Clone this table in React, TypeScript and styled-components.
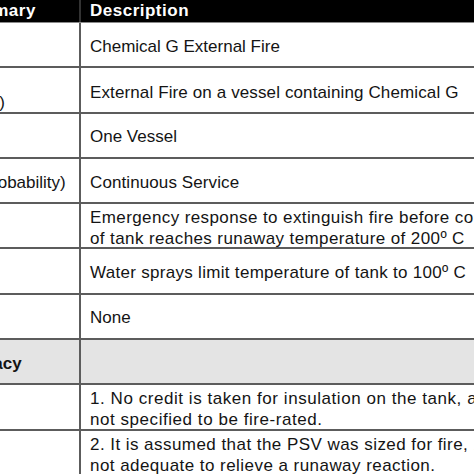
import React from 'react'
import styled, { createGlobalStyle } from 'styled-components'

const GlobalStyle = createGlobalStyle`
  html, body {
    margin: 0;
    padding: 0;
    background: #fff;
    overflow: hidden;
  }
  body {
    width: 474px;
    height: 474px;
    font-family: "Liberation Sans", Arial, Helvetica, sans-serif;
    color: #141414;
  }
`

// the table is wider than the frame: the label column is partly off to the left
const Table = styled.div`
  display: flex;
  flex-direction: column;
  width: 780px;
  margin-left: -159px;
`

const Row = styled.div<{ $shade?: boolean }>`
  display: grid;
  grid-template-columns: 240px 540px;
  height: 45.3px;
  box-sizing: border-box;
  border-bottom: 2px solid #5c5c5c;
  background: ${(p) => (p.$shade ? '#e4e4e4' : '#fff')};
`

const HeadRow = styled.div`
  display: grid;
  grid-template-columns: 240px 540px;
  height: 22px;
  background: #000;
  border-bottom: 1px solid #8a8a8a;
`

const HeadCell = styled.div<{ $first?: boolean }>`
  color: #fff;
  font-weight: bold;
  font-size: 17px;
  letter-spacing: 0.5px;
  line-height: 22px;
  padding-left: ${(p) => (p.$first ? '49px' : '9px')};
  border-right: ${(p) => (p.$first ? '2px solid #333' : 'none')};
  white-space: nowrap;
`

const Cell = styled.div<{ $first?: boolean; $bold?: boolean; $spread?: number; $top?: boolean }>`
  display: flex;
  align-items: ${(p) => (p.$top ? 'flex-start' : 'center')};
  box-sizing: border-box;
  padding: 3px 0 0 ${(p) => (p.$first ? '49px' : '9px')};
  border-right: ${(p) => (p.$first ? '2px solid #5c5c5c' : 'none')};
  font-size: 17px;
  line-height: 21px;
  font-weight: ${(p) => (p.$bold ? 'bold' : 'normal')};
  letter-spacing: ${(p) => p.$spread ?? 0}px;
  white-space: nowrap;
`

const LabelStack = styled.div`
  display: flex;
  flex-direction: column;
  width: 115px;
`

const LabelLine = styled.div<{ $end?: boolean }>`
  text-align: ${(p) => (p.$end ? 'right' : 'left')};
`

type Entry = {
  label: React.ReactNode
  text: React.ReactNode
  bold?: boolean
  shade?: boolean
  spread?: number
  top?: boolean
}

const rows: Entry[] = [
  { label: 'Scenario Title', text: 'Chemical G External Fire' },
  {
    label: (
      <LabelStack>
        <LabelLine>Initiating</LabelLine>
        <LabelLine $end>(Fire Source)</LabelLine>
      </LabelStack>
    ),
    text: 'External Fire on a vessel containing Chemical G',
    spread: 0.12,
  },
  { label: 'Equipment', text: 'One Vessel' },
  { label: 'Frequency (Probability)', text: 'Continuous Service', spread: 0.1 },
  {
    label: 'Mitigation',
    text: (
      <span>
        Emergency response to extinguish fire before contents
        <br />
        of tank reaches runaway temperature of 200º C
      </span>
    ),
    spread: 0.4,
  },
  { label: 'Safeguards', text: 'Water sprays limit temperature of tank to 100º C', spread: 0.3 },
  { label: 'Conditions', text: 'None' },
  { label: 'Relief Adequacy', text: '', bold: true, shade: true },
  {
    label: 'Notes',
    text: (
      <span>
        1. No credit is taken for insulation on the tank, as it is
        <br />
        not specified to be fire-rated.
      </span>
    ),
    spread: 0.55,
    top: true,
  },
  {
    label: '',
    text: (
      <span>
        2. It is assumed that the PSV was sized for fire, but is
        <br />
        not adequate to relieve a runaway reaction.
      </span>
    ),
    spread: 0.45,
    top: true,
  },
]

export default function App() {
  return (
    <>
      <GlobalStyle />
      <Table>
        <HeadRow>
          <HeadCell $first>Hazard Summary</HeadCell>
          <HeadCell>Description</HeadCell>
        </HeadRow>
        {rows.map((r, i) => (
          <Row key={i} $shade={r.shade}>
            <Cell $first $bold={r.bold} $top={r.top}>
              {r.label}
            </Cell>
            <Cell $spread={r.spread} $top={r.top}>
              {r.text}
            </Cell>
          </Row>
        ))}
      </Table>
    </>
  )
}
